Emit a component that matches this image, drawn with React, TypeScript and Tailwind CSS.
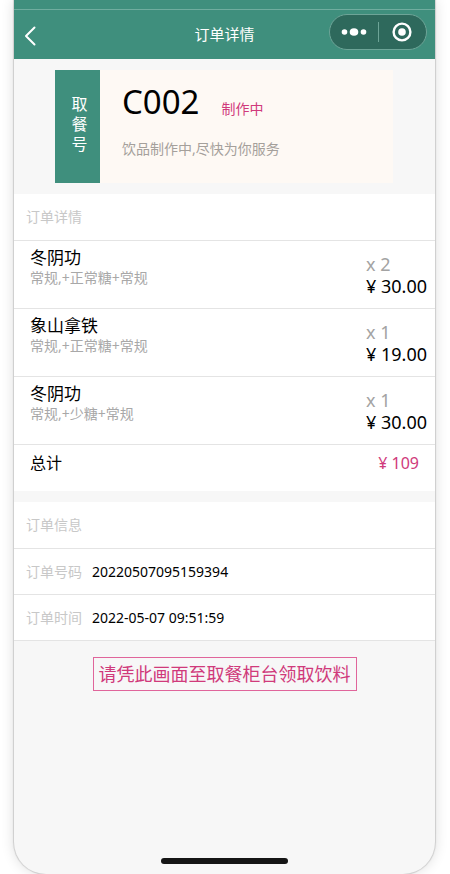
import React from 'react';

interface OrderItem {
  id: number;
  name: string;
  options: string;
  quantity: number;
  price: string;
}

const items: OrderItem[] = [
  { id: 1, name: '冬阴功', options: '常规,+正常糖+常规', quantity: 2, price: '30.00' },
  { id: 2, name: '象山拿铁', options: '常规,+正常糖+常规', quantity: 1, price: '19.00' },
  { id: 3, name: '冬阴功', options: '常规,+少糖+常规', quantity: 1, price: '30.00' }
];

const orderInfo = [
  { label: '订单号码', value: '20220507095159394' },
  { label: '订单时间', value: '2022-05-07 09:51:59' }
];

const NavBar: React.FC = () => {
  return (
    <header className="bg-[#3f8f7d] text-white pt-[9px]">
      <div className="grid grid-cols-[1fr_auto_1fr] items-center h-[50px] border-t border-[#70ad9f] pl-2 pr-2 pb-0.5">
        <button type="button" aria-label="返回" className="justify-self-start pt-1">
          <svg className="w-4 h-6" fill="none" stroke="currentColor" strokeWidth={2} strokeLinecap="round" strokeLinejoin="round" viewBox="0 0 16 24">
            <path d="M12.5 3.5L4 12l8.5 8.5" />
          </svg>
        </button>
        <h1 className="text-[15px] leading-5">订单详情</h1>
        <div className="justify-self-end flex items-center w-[98px] h-9 mb-1 rounded-full bg-[#2e695c] border border-[#6da497]">
          <button type="button" aria-label="更多" className="flex-1 flex justify-center">
            <svg className="w-[26px] h-2" fill="currentColor" viewBox="0 0 26 8">
              <circle cx="3.5" cy="4" r="2.8" />
              <ellipse cx="13" cy="4" rx="4.3" ry="3.8" />
              <circle cx="22.5" cy="4" r="2.8" />
            </svg>
          </button>
          <span className="w-px h-5 bg-[#6da497]" />
          <button type="button" aria-label="关闭" className="flex-1 flex justify-center">
            <svg className="w-5 h-5" fill="none" viewBox="0 0 20 20">
              <circle cx="10" cy="10" r="8.4" stroke="currentColor" strokeWidth={2.4} />
              <circle cx="10" cy="10" r="3.8" fill="currentColor" />
            </svg>
          </button>
        </div>
      </div>
    </header>
  );
};

const PickupCard: React.FC = () => {
  return (
    <section className="flex mt-[11px] mb-[11px] ml-[41px] mr-[42px] bg-[#fef9f4]">
      <div className="flex flex-col items-center w-[45px] pt-6 pb-[29px] pl-1 bg-[#3f8f7d] text-white text-base leading-5">
        <span>取</span>
        <span>餐</span>
        <span>号</span>
      </div>
      <div className="pl-[22px] pt-3">
        <div className="flex items-baseline gap-[22px]">
          <span className="text-[33px] leading-10 text-black">C002</span>
          <span className="text-sm text-[#d03a7b]">制作中</span>
        </div>
        <p className="mt-[15px] text-sm leading-6 text-[#a5a09b]">饮品制作中,尽快为你服务</p>
      </div>
    </section>
  );
};

const SectionTitle: React.FC<{ children: React.ReactNode }> = ({ children }) => {
  return (
    <h2 className="px-3 py-[11px] text-sm leading-6 text-[#c8c8c8] border-b border-[#e4e4e4]">{children}</h2>
  );
};

export default function App() {
  return (
    <div className="min-h-screen bg-white pl-[14px] pr-[15px] overflow-hidden font-['Noto_Sans','Noto_Sans_CJK_SC',sans-serif]">
      <div className="flex flex-col min-h-screen bg-[#f7f7f7] rounded-b-[32px] overflow-hidden shadow-[0_0_1px_1px_rgba(0,0,0,0.14),0_0_14px_rgba(0,0,0,0.14)]">
        <NavBar />
        <main>
          <PickupCard />

          <section className="bg-white">
            <SectionTitle>订单详情</SectionTitle>
            <ul>
              {items.map(item => (
                <li key={item.id} className="flex justify-between h-[68px] pl-4 pr-2 border-b border-[#e4e4e4]">
                  <div className="pt-1.5">
                    <p className="text-[17px] leading-[22px] text-black">{item.name}</p>
                    <p className="text-sm leading-[18px] text-[#a8a8a8]">{item.options}</p>
                  </div>
                  <div className="pt-3 text-lg leading-[22px]">
                    <p className="text-[#a3a3a3]">x {item.quantity}</p>
                    <p className="text-black">¥ {item.price}</p>
                  </div>
                </li>
              ))}
            </ul>
            <div className="flex justify-between pl-4 pr-4 pt-1.5 pb-4 text-base leading-6">
              <span className="text-black">总计</span>
              <span className="text-[#d03a7b]">¥ 109</span>
            </div>
          </section>

          <section className="mt-[11px] bg-white">
            <SectionTitle>订单信息</SectionTitle>
            <dl>
              {orderInfo.map(row => (
                <div key={row.label} className="flex gap-[10px] px-3 py-[11px] text-sm leading-6 border-b border-[#e4e4e4] h-[46px]">
                  <dt className="text-[#c8c8c8]">{row.label}</dt>
                  <dd className="text-black">{row.value}</dd>
                </div>
              ))}
            </dl>
          </section>

          <p className="w-fit mx-auto mt-4 px-[5px] py-[3px] border border-[#e0659b] text-lg leading-[26px] text-[#d03a7b]">
            请凭此画面至取餐柜台领取饮料
          </p>
        </main>
        <div className="w-[30%] h-1.5 mx-auto mt-auto mb-[10px] rounded-full bg-[#151515]" />
      </div>
    </div>
  );
}
